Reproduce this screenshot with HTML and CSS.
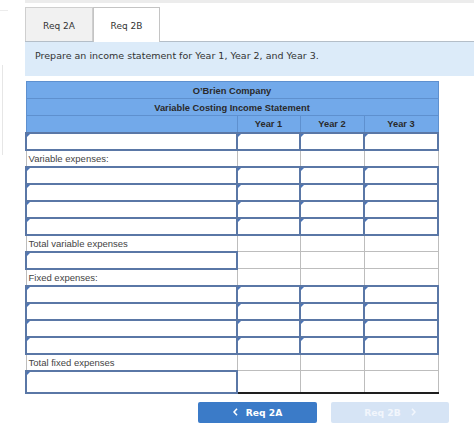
FILE: index.html
```html
<!DOCTYPE html>
<html>
<head>
<meta charset="utf-8">
<link rel="stylesheet" href="styles.css">
</head>
<body>
<div class="page">
  <div class="side"><div class="ghost-top"></div><div class="ghost"></div></div>
  <div class="main">
    <div class="topbar"></div>
    <div class="tabs">
      <div class="tab">Req 2A</div>
      <div class="tab active">Req 2B</div>
    </div>
    <div class="band">Prepare an income statement for Year 1, Year 2, and Year 3.</div>
    <table class="stmt">
      <colgroup><col class="c0"><col class="c1"><col class="c2"><col class="c3"></colgroup>
      <tr class="hd"><td colspan="4">O’Brien Company</td></tr>
      <tr class="hd"><td colspan="4">Variable Costing Income Statement</td></tr>
      <tr class="hd"><td></td><td>Year 1</td><td>Year 2</td><td>Year 3</td></tr>
      <tr><td class="in"><div class="mk"></div></td><td class="in"><div class="mk"></div></td><td class="in"><div class="mk"></div></td><td class="in"><div class="mk"></div></td></tr>
      <tr><td class="lb">Variable expenses:</td><td class="em"></td><td class="em"></td><td class="em"></td></tr>
      <tr><td class="in"><div class="mk"></div></td><td class="in"><div class="mk"></div></td><td class="in"><div class="mk"></div></td><td class="in"><div class="mk"></div></td></tr>
      <tr><td class="in"><div class="mk"></div></td><td class="in"><div class="mk"></div></td><td class="in"><div class="mk"></div></td><td class="in"><div class="mk"></div></td></tr>
      <tr><td class="in"><div class="mk"></div></td><td class="in"><div class="mk"></div></td><td class="in"><div class="mk"></div></td><td class="in"><div class="mk"></div></td></tr>
      <tr><td class="in"><div class="mk"></div></td><td class="in"><div class="mk"></div></td><td class="in"><div class="mk"></div></td><td class="in"><div class="mk"></div></td></tr>
      <tr><td class="lb">Total variable expenses</td><td class="tot"></td><td class="tot"></td><td class="tot"></td></tr>
      <tr><td class="in"><div class="mk"></div></td><td class="tot"></td><td class="tot"></td><td class="tot"></td></tr>
      <tr><td class="lb">Fixed expenses:</td><td class="em"></td><td class="em"></td><td class="em"></td></tr>
      <tr><td class="in"><div class="mk"></div></td><td class="in"><div class="mk"></div></td><td class="in"><div class="mk"></div></td><td class="in"><div class="mk"></div></td></tr>
      <tr><td class="in"><div class="mk"></div></td><td class="in"><div class="mk"></div></td><td class="in"><div class="mk"></div></td><td class="in"><div class="mk"></div></td></tr>
      <tr><td class="in"><div class="mk"></div></td><td class="in"><div class="mk"></div></td><td class="in"><div class="mk"></div></td><td class="in"><div class="mk"></div></td></tr>
      <tr><td class="in"><div class="mk"></div></td><td class="in"><div class="mk"></div></td><td class="in"><div class="mk"></div></td><td class="in"><div class="mk"></div></td></tr>
      <tr><td class="lb">Total fixed expenses</td><td class="tot"></td><td class="tot"></td><td class="tot"></td></tr>
      <tr class="last"><td class="in"><div class="mk"></div></td><td class="tot fin"></td><td class="tot fin"></td><td class="tot fin"></td></tr>
    </table>
    <div class="nav">
      <div class="btn prev"><svg width="5" height="8" viewBox="0 0 5 8"><path d="M4 0.8 L1 4 L4 7.2" fill="none" stroke="#fff" stroke-width="1.6"/></svg><span>Req 2A</span></div>
      <div class="btn next"><span>Req 2B</span><svg width="5" height="8" viewBox="0 0 5 8"><path d="M1 0.8 L4 4 L1 7.2" fill="none" stroke="#f2f6fc" stroke-width="1.6"/></svg></div>
    </div>
  </div>
</div>
</body>
</html>
```
FILE: styles.css
```css
html, body { margin: 0; padding: 0; background: #fff; }
.page { display: grid; grid-template-columns: 25px 1fr; width: 474px; }
.side { display: flex; flex-direction: column; }
.ghost-top { margin-top: 10px; width: 8px; height: 0; border-top: 1px solid #ececec; }
.ghost { margin-top: 54px; width: 2px; height: 90px; border-right: 1px solid #e6e6e6; }
.main { display: flex; flex-direction: column; }
.topbar { height: 3px; background: #ececec; }
.tabs { display: flex; margin-top: 4px; height: 34px; }
.tab {
  width: 68px; height: 34px; box-sizing: border-box;
  background: #f1f1f1; border: 1px solid #cfcfcf; border-bottom: none;
  display: flex; align-items: center; justify-content: center; padding-top: 2px;
  font-family: "DejaVu Sans", Verdana, sans-serif; font-size: 9px; color: #333;
}
.tab.active { background: #fff; width: 67px; height: 35px; margin-bottom: -1px; position: relative; z-index: 1; border-color: #c4c4c4; }
.band {
  border-top: 1px solid #b4bec8; background: #dcebf9; height: 35px; box-sizing: border-box;
  padding: 8px 0 0 10px;
  font-family: "DejaVu Sans", Verdana, sans-serif; font-size: 9.5px; color: #333;
}
.stmt { margin-top: 5px; border-collapse: collapse; table-layout: fixed; width: 412px;
  font-family: "Liberation Sans", Arial, sans-serif; font-size: 9.5px; color: #333; }
.c0 { width: 211px; } .c1 { width: 63px; } .c2 { width: 64px; } .c3 { width: 74px; }
.stmt td { height: 17px; padding: 0; box-sizing: border-box; }
.hd td { background: #72a9ea; border: 1px solid #5e90cf; text-align: center; font-weight: bold; font-size: 9.3px; color: #2a2a2a; padding-top: 1px; }
.lb { border: 1px solid #bdbdbd; padding: 1px 0 0 2px !important; white-space: nowrap; color: #444; }
.em { border: 1px solid #bdbdbd; }
.in { border: 2px solid #5a77a6; background: #fff; vertical-align: top; }
.mk { position: relative; height: 0; }
.mk::before { content: ""; position: absolute; left: 0; top: 0; width: 0; height: 0;
  border-top: 3px solid #4a74b8; border-right: 3px solid transparent; }
.tot { border: 1px solid #bdbdbd; border-top: 1px solid #2b2b2b; }
.last td { height: 22px; }
.fin { border-bottom: 2px solid #1e1e1e; }
.nav { display: flex; justify-content: flex-end; gap: 14px; padding-right: 25px; margin-top: 8px; }
.btn { width: 119px; height: 21px; border-radius: 2px; display: flex; align-items: center; justify-content: center; gap: 8px;
  font-family: "DejaVu Sans", Verdana, sans-serif; font-weight: bold; font-size: 9.2px; }
.prev { background: #3b7bc8; color: #fff; }
.next { width: 118px; background: #d6e4f5; color: #f2f6fc; gap: 10px; }
```
